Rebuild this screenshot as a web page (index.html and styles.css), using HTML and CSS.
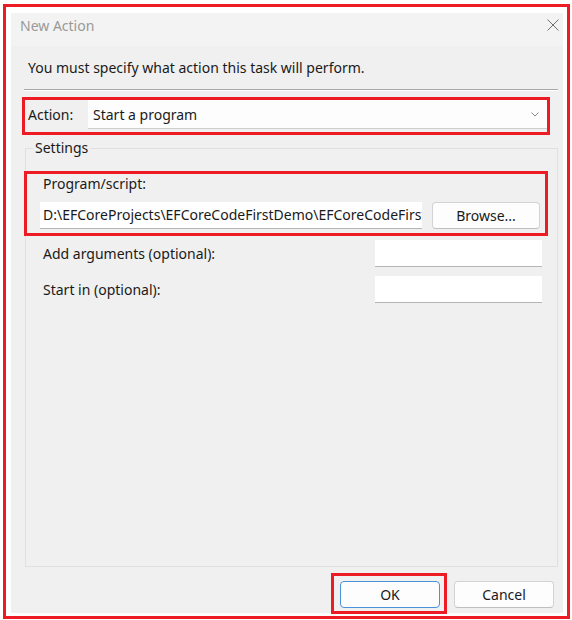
FILE: index.html
```html
<!DOCTYPE html>
<html lang="en">
<head>
  <meta charset="UTF-8">
  <meta name="viewport" content="width=device-width, initial-scale=1.0">
  <title>New Action</title>
  <link rel="stylesheet" href="styles.css">
</head>
<body>
  <div class="frame">
    <div class="window">
      <div class="titlebar">
        <span class="title">New Action</span>
        <svg class="close" width="12" height="12" viewBox="0 0 12 12">
          <path d="M0.5 0.5 L11.5 11.5 M11.5 0.5 L0.5 11.5" stroke="#6f6f6f" stroke-width="1" fill="none"/>
        </svg>
      </div>

      <div class="content">
        <div class="message">You must specify what action this task will perform.</div>
        <div class="separator"></div>

        <div class="action-row mark">
          <span class="action-label">Action:</span>
          <div class="combo">
            <span>Start a program</span>
            <svg width="8" height="5" viewBox="0 0 8 5">
              <polyline points="0.5,0.5 4,4 7.5,0.5" stroke="#8a8a8a" stroke-width="1" fill="none"/>
            </svg>
          </div>
        </div>

        <fieldset class="settings">
          <legend>Settings</legend>

          <div class="program mark">
            <div class="program-label">Program/script:</div>
            <div class="program-row">
              <div class="field path">D:\EFCoreProjects\EFCoreCodeFirstDemo\EFCoreCodeFirstDemo.exe</div>
              <button class="btn browse">Browse...</button>
            </div>
          </div>

          <div class="option-row first">
            <span>Add arguments (optional):</span>
            <div class="field small"></div>
          </div>
          <div class="option-row">
            <span>Start in (optional):</span>
            <div class="field small"></div>
          </div>
        </fieldset>

        <div class="footer">
          <span class="ok-mark mark">
            <button class="btn ok">OK</button>
          </span>
          <button class="btn">Cancel</button>
        </div>
      </div>
    </div>
  </div>
</body>
</html>
```

FILE: styles.css
```css
body {
  margin: 0;
  background: #fff;
  font-family: "Noto Sans", "Open Sans", sans-serif;
  font-size: 14px;
  color: #1a1a1a;
}
.frame {
  box-sizing: border-box;
  width: 567px;
  height: 615px;
  margin: 4px 0 0 3px;
  padding: 6px 4px 3px 5px;
  border: 3px solid #ed1c24;
}
.window {
  height: 100%;
  background: #f0f0f0;
  display: flex;
  flex-direction: column;
}
.titlebar {
  height: 33px;
  box-sizing: border-box;
  padding: 1px 4px 0 9px;
  background: #f3f3f3;
  display: flex;
  justify-content: space-between;
  align-items: flex-start;
}
.title {
  line-height: 24px;
  color: #999;
}
.close {
  margin-top: 5px;
}
.content {
  flex: 1;
  display: flex;
  flex-direction: column;
  padding: 0 5px 5px 13px;
}
.message {
  margin-top: 12px;
  padding-left: 4px;
  line-height: 20px;
}
.separator {
  margin-top: 11px;
  height: 1px;
  background: #a8a8a8;
  border-bottom: 1px solid #fff;
}
.mark {
  outline: 3px solid #ed1c24;
}
.action-row {
  margin: 9px 0 0 1px;
  width: 522px;
  height: 29px;
  padding-bottom: 3px;
  display: flex;
  align-items: center;
}
.action-label {
  width: 60px;
  padding-left: 3px;
}
.combo {
  flex: 1;
  height: 29px;
  box-sizing: border-box;
  background: #fdfdfd;
  border-bottom: 1px solid #cfcfcf;
  display: flex;
  align-items: center;
  justify-content: space-between;
  padding: 0 8px 0 5px;
}
.settings {
  flex: 1;
  margin: 6px 0 0 1px;
  padding: 0;
  border: 1px solid #e0e0e0;
  min-width: 0;
}
.settings legend {
  margin-left: 7px;
  padding: 0 2px;
  line-height: 20px;
}
.program {
  margin: 16px 0 0 1px;
  width: 518px;
  padding-bottom: 4px;
}
.program-label {
  padding-left: 16px;
  line-height: 20px;
}
.program-row {
  margin-top: 8px;
  display: flex;
  gap: 10px;
  padding-left: 13px;
}
.field {
  box-sizing: border-box;
  height: 27px;
  background: #fff;
  border-bottom: 1px solid #b5b5b5;
  line-height: 26px;
  white-space: nowrap;
  overflow: hidden;
}
.path {
  width: 382px;
  padding-left: 3px;
}
.btn {
  box-sizing: border-box;
  height: 27px;
  width: 108px;
  padding: 0;
  font: inherit;
  color: #1a1a1a;
  background: #fdfdfd;
  border: 1px solid #d3d3d3;
  border-bottom-color: #bfbfbf;
  border-radius: 4px;
}
.option-row {
  margin-top: 9px;
  display: flex;
  align-items: center;
  justify-content: space-between;
  padding: 0 15px 0 17px;
}
.option-row.first {
  margin-top: 7px;
}
.small {
  width: 167px;
}
.footer {
  display: flex;
  justify-content: flex-end;
  align-items: flex-start;
  gap: 14px;
  padding: 14px 4px 0 0;
}
.footer .btn {
  width: 100px;
}
.ok-mark {
  display: flex;
  margin: -5px -4px -3px -6px;
  padding: 5px 4px 3px 6px;
}
.ok {
  border-color: #4a92dc;
}
```
